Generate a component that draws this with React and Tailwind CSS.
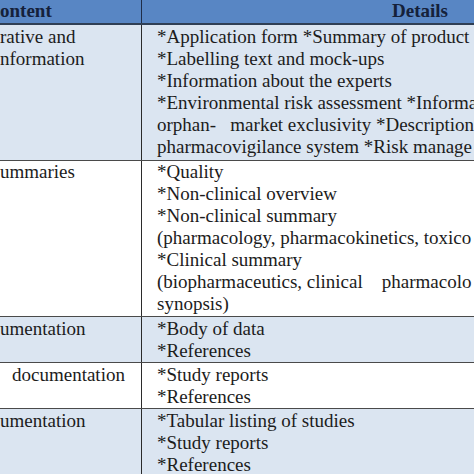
export default function App() {
  const rows = [
    {
      bg: 'bg-[#dbe5f1]',
      left: ['rative and', 'nformation'],
      leftPad: 'pl-0',
      pad: 'pt-[1px] pb-[2px]',
      right: [
        '*Application form *Summary of product',
        '*Labelling text and mock-ups',
        '*Information about the experts',
        '*Environmental risk assessment *Informa',
        'orphan-   market exclusivity *Description',
        'pharmacovigilance system *Risk manage',
      ],
    },
    {
      bg: 'bg-white',
      left: ['ummaries'],
      leftPad: 'pl-0',
      pad: 'pt-0 pb-[1px]',
      right: [
        '*Quality',
        '*Non-clinical overview',
        '*Non-clinical summary',
        '(pharmacology, pharmacokinetics, toxico',
        '*Clinical summary',
        '(biopharmaceutics, clinical    pharmacolo',
        'synopsis)',
      ],
    },
    {
      bg: 'bg-[#dbe5f1]',
      left: ['umentation'],
      leftPad: 'pl-0',
      pad: 'pt-[1px] pb-0',
      right: ['*Body of data', '*References'],
    },
    {
      bg: 'bg-white',
      left: ['documentation'],
      leftPad: 'pl-[12px]',
      pad: 'pt-[1px] pb-0',
      right: ['*Study reports', '*References'],
    },
    {
      bg: 'bg-[#dbe5f1]',
      left: ['umentation'],
      leftPad: 'pl-0',
      pad: 'pt-[1px] pb-0',
      right: ['*Tabular listing of studies', '*Study reports', '*References'],
    },
  ];

  return (
    <div
      className="w-[474px] h-[474px] overflow-hidden bg-white text-[#1c1c1c]"
      style={{ fontFamily: '"Liberation Serif", "Times New Roman", serif' }}
    >
      {/* Header */}
      <div className="grid grid-cols-[141px_600px] h-[25px] bg-[#5886c4] border-b-2 border-[#2f3f55]">
        <div className="text-[19px] leading-[22px] font-bold text-[#15213a] whitespace-nowrap">ontent</div>
        <div className="border-l border-[#1f2d48] text-[19px] leading-[22px] font-bold text-[#15213a] pl-[250px] whitespace-nowrap">
          Details
        </div>
      </div>

      {rows.map((row, i) => (
        <div
          key={i}
          className={`grid grid-cols-[141px_600px] border-b border-[#4a4a4a] ${row.bg}`}
        >
          <div className={`text-[19px] leading-[22px] whitespace-nowrap ${row.pad} ${row.leftPad}`}>
            {row.left.map((t, j) => (
              <div key={j}>{t}</div>
            ))}
          </div>
          <div className={`border-l border-[#2b2b2b] pl-[15px] text-[19px] leading-[22px] ${row.pad}`}>
            {row.right.map((t, j) => (
              <div key={j} className="whitespace-pre">{t}</div>
            ))}
          </div>
        </div>
      ))}
    </div>
  );
}
